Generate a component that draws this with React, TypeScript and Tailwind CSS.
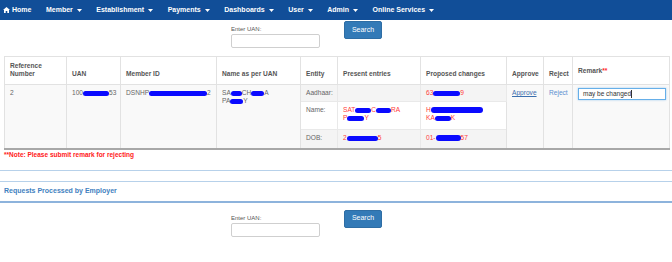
import React from "react";

const navItems = ["Member", "Establishment", "Payments", "Dashboards", "User", "Admin", "Online Services"];

function Caret() {
  return (
    <svg width="5" height="3" viewBox="0 0 5 3" className="ml-[4px] mt-[1px]">
      <path d="M0 0 L5 0 L2.5 3 Z" fill="#ffffff" />
    </svg>
  );
}

function Blot({ className }: { className: string }) {
  return <span className={"inline-block bg-[#0a0aff] rounded-full align-middle " + className} />;
}

function SearchForm() {
  return (
    <div className="flex items-start ml-[231px]">
      <div className="flex flex-col mt-[5px]">
        <label className="text-[6px] leading-[8px] text-[#555]">Enter UAN:</label>
        <input className="mt-[1px] w-[89px] h-[14px] border border-[#cfcfcf] rounded-[2px] bg-white outline-none" />
      </div>
      <button className="ml-[24px] mt-[1px] w-[38px] h-[18px] rounded-[2px] bg-[#337ab7] border border-[#2e6da4] text-white text-[7px]">
        Search
      </button>
    </div>
  );
}

export default function App() {
  const th = "border border-[#e2e2e2] px-[5px] pb-[6px] align-bottom text-left font-bold text-[#555]";
  const td = "border border-[#e2e2e2] px-[5px] pt-[4px] align-top bg-[#f9f9f9] whitespace-nowrap";
  const inner = "border border-[#e9e9e9] px-[5px] pt-[4px] align-top whitespace-nowrap";
  return (
    <div className="w-[672px] h-[262px] bg-white overflow-hidden text-[#666]" style={{ fontFamily: '"Liberation Sans", Arial, sans-serif' }}>
      <nav className="h-[20px] bg-[#114e98] flex items-center pl-[3px] gap-[14.5px] text-white font-bold text-[7px]">
        <div className="flex items-center">
          <svg width="7" height="6" viewBox="0 0 7 6" className="mr-[2px]">
            <path d="M3.5 0 L7 3 L6 3 L6 6 L4.3 6 L4.3 4 L2.7 4 L2.7 6 L1 6 L1 3 L0 3 Z" fill="#ffffff" />
          </svg>
          <span>Home</span>
        </div>
        {navItems.map((n) => (
          <div key={n} className="flex items-center">
            <span>{n}</span>
            <Caret />
          </div>
        ))}
      </nav>

      <SearchForm />

      <div className="mt-[8px] pl-[4px] pr-[3px]">
        <table className="w-[665px] table-fixed border-collapse text-[6.6px] leading-[8px] border-b-2 border-b-[#a8a8a8] border-l border-l-[#bbb]">
          <colgroup>
            <col className="w-[62px]" />
            <col className="w-[54px]" />
            <col className="w-[96px]" />
            <col className="w-[84px]" />
            <col className="w-[37px]" />
            <col className="w-[83px]" />
            <col className="w-[86px]" />
            <col className="w-[37px]" />
            <col className="w-[29px]" />
            <col className="w-[97px]" />
          </colgroup>
          <thead>
            <tr className="h-[28px]">
              <th className={th}>Reference Number</th>
              <th className={th}>UAN</th>
              <th className={th}>Member ID</th>
              <th className={th}>Name as per UAN</th>
              <th className={th}>Entity</th>
              <th className={th}>Present entries</th>
              <th className={th}>Proposed changes</th>
              <th className={th}>Approve</th>
              <th className={th}>Reject</th>
              <th className={th + " !pb-[9px]"}>
                Remark<span className="text-[#ff2a2a]">**</span>
              </th>
            </tr>
          </thead>
          <tbody>
            <tr className="h-[17px]">
              <td rowSpan={3} className={td}>2</td>
              <td rowSpan={3} className={td}>
                100<Blot className="w-[26px] h-[5px]" />53
              </td>
              <td rowSpan={3} className={td}>
                DSNHP<Blot className="w-[58px] h-[5px]" />2
              </td>
              <td rowSpan={3} className={td}>
                SA<Blot className="w-[11px] h-[5px]" />CH<Blot className="w-[13px] h-[5px]" />A
                <br />
                PA<Blot className="w-[13px] h-[5px]" />Y
              </td>
              <td className={inner + " bg-[#f4f4f4]"}>Aadhaar:</td>
              <td className={inner + " bg-[#f4f4f4]"}></td>
              <td className={inner + " bg-[#f4f4f4] text-[#ff3b3b]"}>
                63<Blot className="w-[27px] h-[5px]" />9
              </td>
              <td rowSpan={3} className={td}>
                <a className="underline text-[#3b6fae]">Approve</a>
              </td>
              <td rowSpan={3} className={td}>
                <span className="text-[#5b8ed0]">Reject</span>
              </td>
              <td rowSpan={3} className={td + " !pt-[3px]"}>
                <div className="w-[88px] h-[12px] border border-[#66afe9] bg-white flex items-center pl-[4px] text-[#333] text-[6.5px] shadow-[0_0_2px_#9ecaed]">
                  may be changed<span className="w-px h-[8px] bg-[#333]" />
                </div>
              </td>
            </tr>
            <tr className="h-[28px]">
              <td className={inner + " bg-white"}>Name:</td>
              <td className={inner + " bg-white text-[#ff3b3b]"}>
                SAT<Blot className="w-[16px] h-[5px]" />C<Blot className="w-[15px] h-[5px]" />RA
                <br />
                P<Blot className="w-[17px] h-[5px]" />Y
              </td>
              <td className={inner + " bg-white text-[#ff3b3b]"}>
                H<Blot className="w-[52px] h-[6px]" />
                <br />
                KA<Blot className="w-[16px] h-[5px]" />K
              </td>
            </tr>
            <tr className="h-[19px]">
              <td className={inner + " bg-[#f4f4f4]"}>DOB:</td>
              <td className={inner + " bg-[#f4f4f4] text-[#ff3b3b]"}>
                2<Blot className="w-[31px] h-[5px]" />5
              </td>
              <td className={inner + " bg-[#f4f4f4] text-[#ff3b3b]"}>
                01-<Blot className="w-[25px] h-[6px]" />57
              </td>
            </tr>
          </tbody>
        </table>
      </div>

      <p className="mt-[1px] pl-[4px] text-[6.5px] leading-[8px] font-bold text-[#ff2020]">
        **Note: Please submit remark for rejecting
      </p>

      <div className="mt-[11px] border-t border-[#b7d1ea]" />
      <div className="mt-[10px] border-t border-[#b7d1ea] border-b-2 border-b-[#8db3dc] h-[22px] flex items-center pl-[4px]">
        <span className="text-[7px] font-bold text-[#3f7fc0]">Requests Processed by Employer</span>
      </div>

      <div className="mt-[6px]">
        <SearchForm />
      </div>
    </div>
  );
}
